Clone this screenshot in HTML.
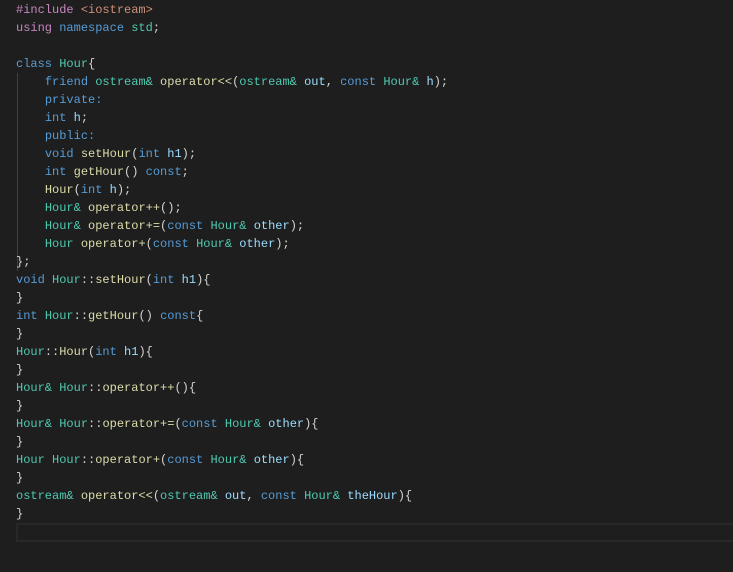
<!DOCTYPE html>
<html><head><style>
html,body{margin:0;padding:0;background:#1e1e1e;width:733px;height:572px;overflow:hidden}
pre{margin:0;position:absolute;left:16px;top:1px;font-family:"Liberation Mono",monospace;font-size:12px;line-height:18px;color:#d4d4d4;}
.k{color:#569cd6}.t{color:#4ec9b0}.f{color:#dcdcaa}.v{color:#9cdcfe}.p{color:#c586c0}.s{color:#ce9178}
.guide{position:absolute;left:17px;top:73px;width:1px;height:198px;background:#404040}
.cur{position:absolute;left:16px;top:523px;width:730px;height:15px;border:2px solid #282828;}
</style></head><body>
<div class="guide"></div>
<div class="cur"></div>
<pre><span class="p">#include</span> <span class="s">&lt;iostream&gt;</span>
<span class="p">using</span> <span class="k">namespace</span> <span class="t">std</span>;

<span class="k">class</span> <span class="t">Hour</span>{
    <span class="k">friend</span> <span class="t">ostream&amp;</span> <span class="f">operator&lt;&lt;</span>(<span class="t">ostream&amp;</span> <span class="v">out</span>, <span class="k">const</span> <span class="t">Hour&amp;</span> <span class="v">h</span>);
    <span class="k">private:</span>
    <span class="k">int</span> <span class="v">h</span>;
    <span class="k">public:</span>
    <span class="k">void</span> <span class="f">setHour</span>(<span class="k">int</span> <span class="v">h1</span>);
    <span class="k">int</span> <span class="f">getHour</span>() <span class="k">const</span>;
    <span class="f">Hour</span>(<span class="k">int</span> <span class="v">h</span>);
    <span class="t">Hour&amp;</span> <span class="f">operator++</span>();
    <span class="t">Hour&amp;</span> <span class="f">operator+=</span>(<span class="k">const</span> <span class="t">Hour&amp;</span> <span class="v">other</span>);
    <span class="t">Hour</span> <span class="f">operator+</span>(<span class="k">const</span> <span class="t">Hour&amp;</span> <span class="v">other</span>);
};
<span class="k">void</span> <span class="t">Hour</span>::<span class="f">setHour</span>(<span class="k">int</span> <span class="v">h1</span>){
}
<span class="k">int</span> <span class="t">Hour</span>::<span class="f">getHour</span>() <span class="k">const</span>{
}
<span class="t">Hour</span>::<span class="f">Hour</span>(<span class="k">int</span> <span class="v">h1</span>){
}
<span class="t">Hour&amp;</span> <span class="t">Hour</span>::<span class="f">operator++</span>(){
}
<span class="t">Hour&amp;</span> <span class="t">Hour</span>::<span class="f">operator+=</span>(<span class="k">const</span> <span class="t">Hour&amp;</span> <span class="v">other</span>){
}
<span class="t">Hour</span> <span class="t">Hour</span>::<span class="f">operator+</span>(<span class="k">const</span> <span class="t">Hour&amp;</span> <span class="v">other</span>){
}
<span class="t">ostream&amp;</span> <span class="f">operator&lt;&lt;</span>(<span class="t">ostream&amp;</span> <span class="v">out</span>, <span class="k">const</span> <span class="t">Hour&amp;</span> <span class="v">theHour</span>){
}
</pre>
</body></html>
